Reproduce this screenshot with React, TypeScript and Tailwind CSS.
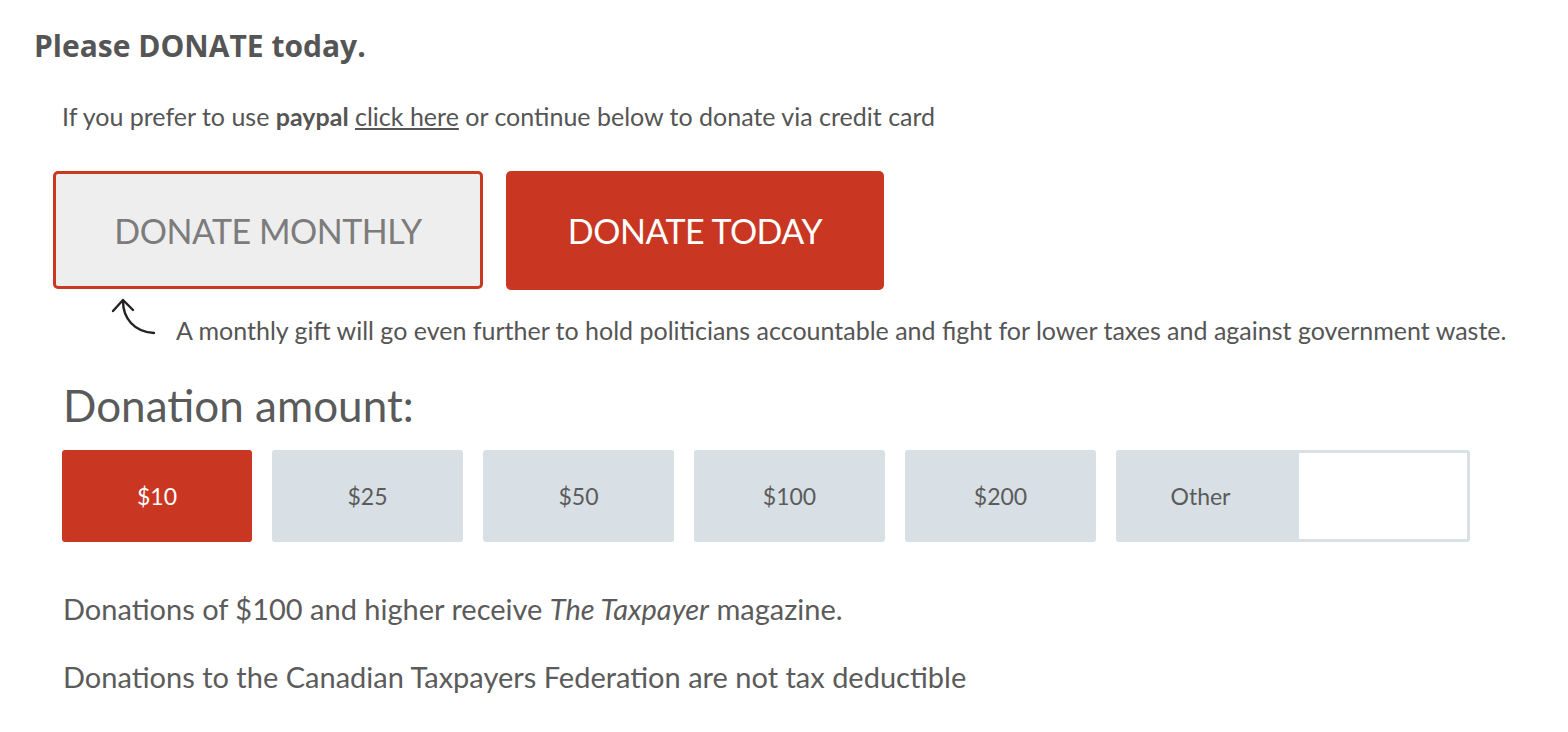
const AMOUNTS = ['$10', '$25', '$50', '$100', '$200']

function CurvedArrow() {
  return (
    <svg width="50" height="44" viewBox="0 0 50 44" className="shrink-0" fill="none" stroke="#222" strokeWidth="2.4" strokeLinecap="round" strokeLinejoin="round">
      <path d="M15 5 C15 22 26 36 46 37" />
      <path d="M5 15 L15 4 L25 14" />
    </svg>
  )
}

export default function App() {
  return (
    <div className="w-[1568px] h-[732px] bg-white text-[#5b5b5b] font-['Lato',sans-serif]">
      <div className="pl-[34px] pt-[28px]">
        <h1 className="font-['Open_Sans',sans-serif] font-bold text-[30px] leading-[36px] text-[#555]">Please DONATE today.</h1>
      </div>

      <p className="pl-[62px] mt-[37px] text-[25px] leading-[30px] text-[#555]">
        If you prefer to use <b>paypal</b> <a className="underline">click here</a> or continue below to donate via credit card
      </p>

      <div className="flex gap-[23px] pl-[53px] mt-[40px]">
        <button className="w-[430px] h-[118px] rounded-[5px] border-[3px] border-[#c9391f] bg-[#eeeeee] text-[#7c7c7c] text-[34px] tracking-[-0.5px]">
          DONATE MONTHLY
        </button>
        <button className="w-[378px] h-[119px] rounded-[5px] bg-[#c93722] text-white text-[34px] tracking-[-0.5px]">
          DONATE TODAY
        </button>
      </div>

      <div className="flex items-start gap-[18px] pl-[108px] mt-[6px]">
        <CurvedArrow />
        <span className="mt-[19px] text-[25px] leading-[30px] text-[#555]">
          A monthly gift will go even further to hold politicians accountable and fight for lower taxes and against government waste.
        </span>
      </div>

      <h2 className="pl-[63px] mt-[34px] text-[44px] leading-[52px] text-[#5a5a5a]">Donation amount:</h2>

      <div className="flex gap-[20px] pl-[62px] mt-[19px]">
        {AMOUNTS.map((a, i) => (
          <button
            key={a}
            className={
              i === 0
                ? 'w-[190px] h-[92px] rounded-[3px] bg-[#c93722] text-white text-[23px]'
                : 'w-[191px] h-[92px] rounded-[3px] bg-[#d8e0e5] text-[#5b5b5b] text-[23px]'
            }
          >
            {a}
          </button>
        ))}
        <div className="flex w-[354px] h-[92px] rounded-[3px] bg-[#d8e0e5] p-[3px] pl-0">
          <span className="w-[183px] shrink-0 pr-[14px] flex items-center justify-center text-[23px] text-[#5b5b5b]">Other</span>
          <input className="flex-1 min-w-0 bg-white outline-none" />
        </div>
      </div>

      <p className="pl-[63px] mt-[50px] text-[29px] leading-[34px]">
        Donations of $100 and higher receive <i>The Taxpayer</i> magazine.
      </p>
      <p className="pl-[63px] mt-[34px] text-[29px] leading-[34px]">
        Donations to the Canadian Taxpayers Federation are not tax deductible
      </p>
    </div>
  )
}
